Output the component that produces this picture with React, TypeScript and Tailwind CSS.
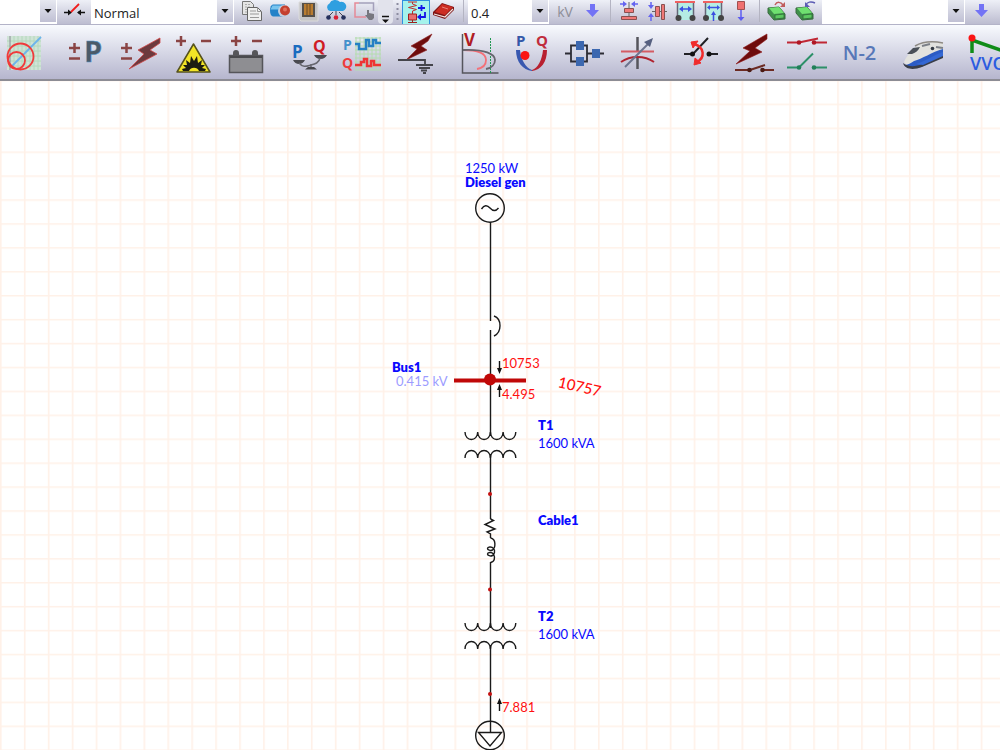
import type { ReactNode } from 'react';
import clsx from 'clsx';

type TIcon = {
  width?: number;
  children: ReactNode;
};

// small icons of the upper bar
const SmallIcon = ({ width = 28, children }: TIcon) => (
  <svg width={width} height={24} viewBox={`0 0 ${width} 24`} fill="none" aria-hidden="true">
    {children}
  </svg>
);

// big icons of the lower bar
const BigIcon = ({ width = 53, children }: TIcon) => (
  <svg width={width} height={52} viewBox={`0 0 ${width} 52`} fill="none" aria-hidden="true">
    {children}
  </svg>
);

type TTool = {
  label: string;
  className?: string;
  children: ReactNode;
};

const Tool = ({ label, className, children }: TTool) => (
  <button type="button" aria-label={label} className={clsx('shrink-0', className)}>
    {children}
  </button>
);

type TCombo = {
  label: string;
  value: string;
  className?: string;
};

const Combo = ({ label, value, className }: TCombo) => (
  <div className={clsx('relative h-[23px] shrink-0 bg-white', className)}>
    <select
      aria-label={label}
      defaultValue={value}
      className="h-full w-full appearance-none bg-white pb-0.5 pl-[3px] pr-4 text-[13px] leading-5 text-[#222222] outline-none"
    >
      <option value={value}>{value}</option>
    </select>
    <span className="pointer-events-none absolute right-px top-0 grid h-[22px] w-4 place-items-center bg-linear-to-b from-[#e6e8f0] to-[#c0c0d4]">
      <svg width="8" height="4" viewBox="0 0 8 4" aria-hidden="true">
        <path d="M0.500 0h7L4 4z" fill="#111111" />
      </svg>
    </span>
  </div>
);

const Divider = ({ className }: { className?: string }) => (
  <div className={clsx('flex h-[22px] shrink-0 justify-center', className)}>
    <span className="w-px bg-[#b4b4c2]" />
  </div>
);

const DownArrow = () => <path d="M8 4h5v6h4l-6.500 7L4 10h4z" fill="#7373f5" />;

const GreenBox = () => (
  <>
    <path d="M5 8l11-1 6 7v5l-11 1-6-7z" fill="#3f8f4a" stroke="#3a6a40" />
    <path d="M6 8l10-1 5 6-10 1z" fill="#6fe070" />
    <path d="M12 15l9-1v4l-9 1z" fill="#5cc860" stroke="#2f6a38" strokeWidth="0.800" />
  </>
);

const TopBar = () => (
  <div className="flex h-[26px] items-start overflow-hidden border-b-2 border-[#b3b3c8] bg-linear-to-b from-[#eef0f7] to-[#bcbcd0]">
    <Combo label="Configuration" value="" className="w-[57px]" />
    <Tool label="Switch status">
      <SmallIcon width={34}>
        <path d="M7 12.500h6M21 12.500h7" stroke="#111" strokeWidth="1.500" />
        <path d="M11 9.500l4 3-4 3zM24 9.500l-4 3 4 3z" fill="#111" />
        <path d="M14 12l8-8" stroke="#f01c1c" strokeWidth="1.800" />
      </SmallIcon>
    </Tool>
    <Combo label="Status" value="Normal" className="w-[143px]" />
    <div className="ml-1 flex shrink-0">
      <Tool label="Copy">
        <SmallIcon>
          <path d="M4.500 1.500h8l3 3v10h-11z" fill="#e4e4e4" stroke="#777" />
          <path d="M7 4.500h5M7 7h5M7 9.500h5M7 12h5" stroke="#aaa" strokeDasharray="2 1" />
          <path d="M9.500 7.500h10l4 4v9h-14z" fill="#efefef" stroke="#666" />
          <path d="M19.500 7.500v4h4M12 11h6M12 14h9M12 17.500h9" stroke="#999" />
        </SmallIcon>
      </Tool>
      <Tool label="Cable size">
        <SmallIcon>
          <path d="M7 4.500h12v12H7a3 6 0 0 1 0-12z" fill="#2482c8" />
          <path d="M6.500 5.500h12v4h-14z" fill="#79c4ee" />
          <circle cx="18" cy="11" r="6" fill="#c3cfde" />
          <circle cx="19" cy="10.500" r="5" fill="#c4402f" />
          <circle cx="19" cy="9.500" r="2" fill="#e0705e" />
        </SmallIcon>
      </Tool>
      <Tool label="Panel">
        <SmallIcon>
          <path d="M5 2h17l2 2v17H7l-2-2z" fill="#c4c4c6" stroke="#dcdcdc" />
          <path d="M8 3h13v14H8z" fill="#55504a" />
          <path d="M10 4h9v11h-9z" fill="#b87c30" />
          <path d="M13 4v11M16 4v11" stroke="#6a4a25" />
        </SmallIcon>
      </Tool>
      <Tool label="Cloud">
        <SmallIcon>
          <path d="M8 11a4 4 0 0 1-.5-7.500A6 5 0 0 1 18 2a4.500 4.500 0 0 1 3 9z" fill="#2f9fe0" />
          <path d="M14 11v4M11 12l-4 4M17 12l4 4" stroke="#445" />
          <circle cx="6.500" cy="17.500" r="2.300" fill="#26305c" />
          <circle cx="14" cy="17.500" r="2.300" fill="#d82034" />
          <circle cx="21.500" cy="17.500" r="2.300" fill="#26305c" />
        </SmallIcon>
      </Tool>
      <Tool label="Select area">
        <SmallIcon>
          <path d="M23.500 11V3H9" stroke="#a3a0bb" strokeWidth="1.500" />
          <path d="M9 3H5v14h11" stroke="#e58a98" strokeWidth="1.500" />
          <path d="M17 10h2v3l5 1v4l-2 2h-3l-4-5 2 0z" fill="#77777f" />
        </SmallIcon>
      </Tool>
    </div>
    <Tool label="Toolbar options" className="w-[15px] self-stretch rounded-b bg-[#e2e3ec]">
      <SmallIcon width={15}>
        <path d="M4 16.500h7" stroke="#111" strokeWidth="1.500" />
        <path d="M4 19.500h7l-3.500 3.500z" fill="#111" />
      </SmallIcon>
    </Tool>
    <div className="w-[9px] shrink-0">
      <SmallIcon width={9}>
        <path d="M4.500 3v17" stroke="#8c8ca0" strokeWidth="2" strokeDasharray="2 3" />
      </SmallIcon>
    </div>
    <Tool label="Show results" className="w-[28px] border border-[#2f8fe0] bg-[#a5f3ec]">
      <SmallIcon width={26}>
        <path d="M5 1h9M9.500 1v2l4 1.500-8 2 8 2-4 1.500v3" stroke="#c03030" />
        <path d="M5.500 13h8v6h-8z" fill="#e87070" stroke="#a02020" />
        <path d="M9.500 19v2M5 21.500h9" stroke="#a02020" />
        <path d="M15 7h7M18.500 4v6" stroke="#1414e8" strokeWidth="1.800" />
        <path d="M22 11v5h-6" stroke="#1414e8" strokeWidth="1.800" />
        <path d="M18 12.500v7l-4-3.500z" fill="#1414e8" />
      </SmallIcon>
    </Tool>
    <Tool label="Library">
      <SmallIcon>
        <path d="M3 12l9-9 12 4v3l-9 9-12-4z" fill="#7e1515" />
        <path d="M5 12l7-8 11 3-8 8z" fill="#cc2c22" />
        <path d="M4 14l11 3 8-8" stroke="#f3e4e0" strokeWidth="1.200" />
        <path d="M12 7l6 2" stroke="#e88078" />
      </SmallIcon>
    </Tool>
    <Divider className="w-[10px]" />
    <Combo label="Voltage" value="0.4" className="w-[81px]" />
    <span className="w-8 shrink-0 text-center text-[14px] leading-6 text-[#8e8e98]">kV</span>
    <Tool label="Apply voltage">
      <SmallIcon width={24}>
        <g transform="translate(1 0)">
          <DownArrow />
        </g>
      </SmallIcon>
    </Tool>
    <Divider className="w-[10px]" />
    <div className="flex shrink-0">
      <Tool label="Align centers vertically">
        <SmallIcon>
          <path d="M14 2v18" stroke="#666" />
          <path d="M9.500 8.500h9v4h-9zM6.500 16.500h15v3h-15z" fill="#f07878" stroke="#8a5050" />
          <path d="M5 4h4M23 4h-4" stroke="#6464f0" strokeWidth="1.500" />
          <path d="M8 1v6l4-3zM20 1v6l-4-3z" fill="#6464f0" />
        </SmallIcon>
      </Tool>
      <Tool label="Align centers horizontally">
        <SmallIcon>
          <path d="M9 11.500h15" stroke="#666" />
          <path d="M12.500 6.500h4v10h-4zM18.500 4.500h3v15h-3z" fill="#f07878" stroke="#8a5050" />
          <path d="M8 2v4M8 21v-4" stroke="#6464f0" strokeWidth="1.500" />
          <path d="M5 5h6L8 9zM5 17h6l-3-4z" fill="#6464f0" />
        </SmallIcon>
      </Tool>
      <Tool label="Distribute horizontally">
        <SmallIcon>
          <path d="M6 3h17v17H6z" fill="#b4ece4" />
          <path d="M4 2h20" stroke="#f06060" strokeWidth="2" />
          <path d="M6.500 3v14M22.500 3v14" stroke="#667" strokeWidth="1.500" />
          <circle cx="7.500" cy="18" r="3" fill="#444" />
          <circle cx="21.500" cy="18" r="3" fill="#444" />
          <path d="M10 9h9" stroke="#3c50e0" strokeWidth="1.500" />
          <path d="M8 9l4-3v6zM21 9l-4-3v6z" fill="#3c50e0" />
        </SmallIcon>
      </Tool>
      <Tool label="Distribute vertically">
        <SmallIcon>
          <path d="M6 3h17v17H6z" fill="#b4ece4" />
          <path d="M4 2h20" stroke="#f06060" strokeWidth="2" />
          <path d="M6.500 3v14M22.500 3v14" stroke="#667" strokeWidth="1.500" />
          <circle cx="7" cy="18" r="3" fill="#444" />
          <circle cx="22" cy="18" r="3" fill="#444" />
          <path d="M10 7.500h9M14.500 14v7" stroke="#3c50e0" strokeWidth="1.500" />
          <path d="M8 7.500l3-2.500v5zM21 7.500l-3-2.500v5zM12 15l2.500-4 2.500 4z" fill="#3c50e0" />
        </SmallIcon>
      </Tool>
      <Tool label="Drop element">
        <SmallIcon>
          <path d="M10.500 1.500h7v8h-7z" fill="#f07070" stroke="#a05050" />
          <path d="M14 10v8" stroke="#5c5cf0" strokeWidth="1.500" />
          <path d="M10.500 17h7l-3.500 4z" fill="#5c5cf0" />
        </SmallIcon>
      </Tool>
    </div>
    <Divider className="w-2" />
    <div className="flex shrink-0">
      <Tool label="Load base">
        <SmallIcon>
          <GreenBox />
          <path d="M12 5c2-4 6-3 8 0" stroke="#c05c5c" strokeWidth="1.500" />
          <path d="M22 2v5h-5z" fill="#c05c5c" />
        </SmallIcon>
      </Tool>
      <Tool label="Save base">
        <SmallIcon>
          <GreenBox />
          <path d="M24 3c-4-2-8-1-9 2" stroke="#5c5cb4" strokeWidth="1.500" />
          <path d="M14 2v5h5z" fill="#5c5cb4" />
        </SmallIcon>
      </Tool>
    </div>
    <Combo label="Find" value="" className="ml-[3px] min-w-[80px] flex-1" />
    <Tool label="Go to">
      <SmallIcon width={35}>
        <g transform="translate(6 0)">
          <DownArrow />
        </g>
      </SmallIcon>
    </Tool>
  </div>
);

const PLUS = 'stroke-[#8a4444] stroke-[2.5px]';

const StudyBar = () => (
  <div className="-mt-px flex h-14 items-start gap-[10px] overflow-hidden border-b-2 border-[#8c8c94] bg-linear-to-b from-[#f8fafe] to-[#b6b6ce] pt-[3px]">
    <div className="-ml-0.5 flex shrink-0">
      <Tool label="Protection zones">
        <BigIcon>
          <path d="M9 8h34v34H9z" fill="#cfe3d6" />
          <path
            d="M16 8v34M20 8v34M24 8v34M28 8v34M32 8v34M36 8v34M40 8v34M9 13h34M9 18h34M9 23h34M9 28h34M9 33h34M9 38h34"
            stroke="#b4d8bc"
          />
          <path d="M12 8v34" stroke="#8a8a94" />
          <path d="M14 38L43 9" stroke="#6cb4ec" strokeWidth="1.800" />
          <circle cx="22.500" cy="28.500" r="13" stroke="#f03a3a" strokeWidth="1.800" />
          <circle cx="18.500" cy="32.500" r="8.500" stroke="#f03a3a" strokeWidth="1.800" />
        </BigIcon>
      </Tool>
    </div>
    <div className="flex shrink-0">
      <Tool label="Load flow">
        <BigIcon>
          <path d="M8 20h11M13.500 15v10M8 30.500h11" className={PLUS} />
          <text
            x="23"
            y="34"
            className="font-['Open_Sans',sans-serif] text-[29px] font-bold"
            fill="#4c5a68"
            stroke="#5098cc"
            strokeWidth="0.400"
          >
            P
          </text>
        </BigIcon>
      </Tool>
      <Tool label="Short circuit">
        <BigIcon>
          <path d="M7 20h11M12.500 15v10M7 30.500h11" className={PLUS} />
          <path d="M46 10L24 22l6 4-15 15 28-15-7-4 10-7z" fill="#6c3a3e" stroke="#d04848" strokeWidth="0.800" />
        </BigIcon>
      </Tool>
      <Tool label="Arc flash">
        <BigIcon>
          <path d="M9 13h10M14 8v10M34 13h10" className={PLUS} />
          <path d="M26.500 16L43 44H10z" fill="#f2e426" stroke="#55521c" strokeWidth="1.500" strokeLinejoin="round" />
          <path
            d="M16 43l-1-2 4-1-3-3 4 0-1-5 4 3 1-7 3 5 3-5 1 7 4-3-1 5 4 0-3 3 4 1-1 2h-6a5.500 5.500 0 0 0-10 0z"
            fill="#1c1c12"
          />
        </BigIcon>
      </Tool>
      <Tool label="Battery">
        <BigIcon>
          <path d="M11 13h10M16 8v10M32 13h10" className={PLUS} />
          <path d="M13 27v-2q0-3 3-3t3 3v2zM32 27v-2q0-3 3-3t3 3v2z" fill="#56565a" />
          <path d="M9.500 27.500h33v17h-33z" fill="#8e8e92" stroke="#55555a" strokeWidth="1.500" />
          <path d="M10 29h32" stroke="#4a4a4e" strokeWidth="2" />
        </BigIcon>
      </Tool>
    </div>
    <div className="flex shrink-0">
      <Tool label="Balanced load flow">
        <BigIcon>
          <text x="9" y="30" className="font-['Open_Sans',sans-serif] text-[17px] font-bold" fill="#1a6cc0">
            P
          </text>
          <text x="30" y="24" className="font-['Open_Sans',sans-serif] text-[16px] font-bold" fill="#d01c24">
            Q
          </text>
          <path d="M10 32h12q-2 4-6 4t-6-4zM31 27h13q-2 4-6.500 4T31 27z" fill="#4a4a50" />
          <path d="M16 35c4 5 8 3 12 2s8-2 9-7M28 36v5" stroke="#66666e" strokeWidth="1.500" />
          <path d="M22 41.500l3-2.500h6l3 2.500z" fill="#44444a" />
        </BigIcon>
      </Tool>
      <Tool label="Time domain load flow">
        <BigIcon>
          <path
            d="M20 9v33M24 9v33M28 9v33M32 9v33M36 9v33M40 9v33M44 9v33M19 10h26M19 14h26M19 18h26M19 22h26M19 26h26M19 30h26M19 34h26M19 38h26M19 42h26"
            stroke="#b4dcae"
          />
          <text x="7" y="22" className="font-['Open_Sans',sans-serif] text-[14px] font-bold" fill="#4490cc">
            P
          </text>
          <text x="6" y="40" className="font-['Open_Sans',sans-serif] text-[14px] font-bold" fill="#ee3c3c">
            Q
          </text>
          <path d="M19 16h4v5h7v-9h3v6h4v-6h3v3h5" stroke="#2480c4" strokeWidth="2.500" />
          <path d="M19 37h6v-3h3v-3h3v7h4v-5h3v4h7" stroke="#ee3434" strokeWidth="2.500" />
        </BigIcon>
      </Tool>
      <Tool label="Ground fault">
        <BigIcon>
          <path d="M43 6L22 18l6 3-11 11 21-10-6-4 7-5z" fill="#6e0c0c" stroke="#8e2424" strokeWidth="0.600" />
          <path d="M9 32h27v4M27 37h17M30 40h11M32 42.500h6M34 45h3" stroke="#44444a" strokeWidth="1.800" />
        </BigIcon>
      </Tool>
    </div>
    <div className="flex shrink-0">
      <Tool label="Voltage stability">
        <BigIcon>
          <path d="M10.500 6v39h36" stroke="#55555c" strokeWidth="1.500" />
          <text x="12" y="18" className="font-['Open_Sans',sans-serif] text-[17px] font-bold" fill="#b01c24">
            V
          </text>
          <path d="M38.500 10v35" stroke="#209850" strokeDasharray="2 1" />
          <path d="M11 22c16 0 23 4 23 10 0 5-3 8-9 9" stroke="#f47078" strokeWidth="1.800" />
          <path d="M11 22c22-1 32 4 32 10 0 4-3 8-9 9" stroke="#66666e" strokeWidth="1.800" />
        </BigIcon>
      </Tool>
      <Tool label="Optimal power flow">
        <BigIcon>
          <text x="11" y="18" className="font-['Open_Sans',sans-serif] text-[15px] font-bold" fill="#3458a8">
            P
          </text>
          <text x="31" y="18" className="font-['Open_Sans',sans-serif] text-[15px] font-bold" fill="#c02c3c">
            Q
          </text>
          <path d="M11 22h4c1 10 6 18 12 20v1C18 42 11 34 11 22z" fill="#3858b0" />
          <path d="M42 22h-4c-1 10-5 18-11 20v1c9-1 15-9 15-21z" fill="#b82030" />
          <circle cx="20" cy="27.500" r="4.500" fill="#fa1414" />
        </BigIcon>
      </Tool>
      <Tool label="Reliability">
        <BigIcon>
          <path d="M7 25.500h6M22 17.500h-9v16h16v-16h-9M29 25.500h17" stroke="#2c2c34" strokeWidth="1.800" />
          <path d="M18 13h8v9h-8zM18 29h8v9h-8zM34 21h8v9h-8z" fill="#3c68b0" />
        </BigIcon>
      </Tool>
      <Tool label="Capacitor placement">
        <BigIcon>
          <path d="M26.500 9v14M26.500 29v12" stroke="#55555c" strokeWidth="2.500" />
          <path d="M10 23.500h33" stroke="#d45c64" strokeWidth="2" />
          <path d="M10 34q7-5 16.500-5T43 34" stroke="#b02430" strokeWidth="2" />
          <path d="M14 39l24-24" stroke="#6c748e" strokeWidth="2" />
          <path d="M42 10l-9 4 6 5z" fill="#566080" />
        </BigIcon>
      </Tool>
    </div>
    <div className="flex shrink-0">
      <Tool label="Switching sequence">
        <BigIcon>
          <path d="M10 26h9l15-16M35 26h9" stroke="#202024" strokeWidth="2" />
          <circle cx="18.500" cy="26" r="2.500" fill="#111" />
          <circle cx="35" cy="26" r="2.500" fill="#111" />
          <path d="M20 16c11 3 11 14 3 18" stroke="#f02c2c" strokeWidth="2.500" />
          <path d="M17 14l7-1-5 7zM20 37l1-7 6 5z" fill="#f02c2c" stroke="#f02c2c" />
        </BigIcon>
      </Tool>
      <Tool label="Switch fault">
        <BigIcon>
          <path d="M40 6L16 20l7 3L9 36l26-12-7-4 12-9z" fill="#6e0c0c" stroke="#901818" strokeWidth="0.600" />
          <path d="M8 42h15l15-5M35 42h12" stroke="#6c2a22" strokeWidth="2" />
          <circle cx="22.500" cy="42" r="2.300" fill="#4a1a14" />
          <circle cx="35.500" cy="42" r="2.300" fill="#4a1a14" />
        </BigIcon>
      </Tool>
      <Tool label="Switching optimization">
        <BigIcon>
          <path d="M7 14.500h12l19-4M34 14.500h13" stroke="#c02834" strokeWidth="2" />
          <circle cx="19" cy="14.500" r="2.300" fill="#b01824" />
          <circle cx="34" cy="14.500" r="2.300" fill="#b01824" />
          <path d="M7 39.500h12l14-14M34 39.500h13" stroke="#2c9068" strokeWidth="2" />
          <circle cx="19" cy="39.500" r="2.300" fill="#208058" />
          <circle cx="34" cy="39.500" r="2.300" fill="#208058" />
        </BigIcon>
      </Tool>
      <button type="button" className="h-[50px] w-[53px] shrink-0 text-[20px] font-semibold text-[#5878b8]">
        N-2
      </button>
    </div>
    <Tool label="Traction power">
      <BigIcon>
        <path d="M8 34c3-8 12-17 23-20 5-1 11-1 16 1v7L22 36c-6 2-12 2-14-2z" fill="#e2e2de" />
        <path d="M18 33c8-2 18-9 29-12v8L25 39c-6 2-13 1-17-2 4 0 7-2 10-4z" fill="#2c5cc4" />
        <path d="M7 35c5 4 12 4 19 1l21-9v3L26 39c-8 3-17 3-19-4z" fill="#3a3e48" />
        <path d="M20 36c8-2 18-9 27-12v4L27 37z" fill="#3468d4" />
        <path d="M11 26l6-6 7-1c-2 4-5 6-8 7z" fill="#4a5058" />
        <path d="M19 18c7-4 18-5 28-3" stroke="#8e8a84" strokeWidth="1.500" />
        <path d="M26 18l8-2M40 19l7 1" stroke="#7c8088" strokeWidth="2" />
        <circle cx="36.500" cy="20.500" r="1.800" fill="#333a44" />
      </BigIcon>
    </Tool>
    <Tool label="Volt-VAR optimization">
      <BigIcon>
        <path d="M13 25V12l40 14" stroke="#108c18" strokeWidth="3.500" />
        <circle cx="13" cy="10" r="3.500" fill="#fa1414" />
        <text x="11" y="42" className="font-['Open_Sans',sans-serif] text-[18px] font-semibold" fill="#2c5ce0">
          VVO
        </text>
      </BigIcon>
    </Tool>
  </div>
);

const Grid = () => (
  <svg className="absolute inset-0 h-full w-full" aria-hidden="true">
    <defs>
      <pattern id="grid" x="0" y="-1.300" width="23.920" height="23.920" patternUnits="userSpaceOnUse">
        <path d="M0.800 0v24M0 0.800h24" stroke="#fff1e8" strokeWidth="1.600" />
      </pattern>
    </defs>
    <rect width="100%" height="100%" fill="url(#grid)" />
  </svg>
);

// two windings facing each other, x and y give the top center
const Transformer = ({ x, y }: { x: number; y: number }) => (
  <g transform={`translate(${x} ${y})`}>
    <path d="M-25.500 0c0 10 12.700 10 12.700 0c0 10 12.700 10 12.700 0c0 10 12.700 10 12.700 0c0 10 12.700 10 12.700 0" />
    <path d="M-25.500 26c0-10 12.700-10 12.700 0c0-10 12.700-10 12.700 0c0-10 12.700-10 12.700 0c0-10 12.700-10 12.700 0" />
  </g>
);

const OneLine = () => (
  <svg width="1000" height="669" viewBox="0 0 1000 669" fill="none" role="img" aria-label="One-line diagram">
    <g stroke="#1a1a1a" strokeWidth="1.400">
      <circle cx="490" cy="127" r="14.300" />
      <path d="M481.500 128q4-6 8.500-1t8.500 0" />
      <path d="M490.500 141v99M490.500 249v106M490.500 373v65M490.500 481v66M490.500 565v86" />
      <path d="M494 235c8 3 8 16 0 20" />
      <Transformer x={490.5} y={351} />
      <Transformer x={490.5} y={542} />
      <path d="M490.500 438l3 1.500-8.500 4 10 4.500-8 3 3.500 2v4" />
      <path d="M490.500 457c6 1 5 10 2 12-2 1-5 0-5-1.500s4-2.500 6 0c2 2 1 6-1 7s-5 0-5-1.500 4-2.500 6 0c2 4 1 8-3 8.500" />
      <circle cx="490" cy="654.500" r="14.300" />
      <path d="M478.500 651.500h23L490 665z" />
    </g>
    <path d="M454 299.500h72" stroke="#c00808" strokeWidth="4" />
    <circle cx="490" cy="298.500" r="6" fill="#c00808" />
    <g fill="#c41010">
      <circle cx="490" cy="413" r="2" />
      <circle cx="490" cy="508.500" r="2" />
      <circle cx="490" cy="613" r="2" />
    </g>
    <g stroke="#111" strokeWidth="1.400">
      <path d="M499.500 280v9M499.500 316v-9M499.500 630v-9" />
      <path d="M497 287h5l-2.500 6zM497 309h5l-2.500-6zM497 623h5l-2.500-6z" fill="#111" stroke="none" />
    </g>
  </svg>
);

const labels = [
  { text: '1250 kW', className: 'left-[465px] top-[80px] text-[#0a0aff]' },
  { text: 'Diesel gen', className: 'left-[465px] top-[94px] font-extrabold text-[#0a0aff]' },
  { text: 'Bus1', className: 'left-[392px] top-[279px] font-extrabold text-[#0a0aff]' },
  { text: '0.415 kV', className: 'left-[396px] top-[293px] text-[#9c9cff]' },
  { text: '10753', className: 'left-[502px] top-[275px] text-[#ff1010]' },
  { text: '4.495', className: 'left-[502px] top-[306px] text-[#ff1010]' },
  { text: '10757', className: 'left-[558px] top-[298px] rotate-[13deg] text-[15px] font-medium text-[#ff1010]' },
  { text: 'T1', className: 'left-[538px] top-[337px] font-extrabold text-[#0a0aff]' },
  { text: '1600 kVA', className: 'left-[538px] top-[355px] text-[#0a0aff]' },
  { text: 'Cable1', className: 'left-[538px] top-[432px] font-extrabold text-[#0a0aff]' },
  { text: 'T2', className: 'left-[538px] top-[528px] font-extrabold text-[#0a0aff]' },
  { text: '1600 kVA', className: 'left-[538px] top-[546px] text-[#0a0aff]' },
  { text: '7.881', className: 'left-[502px] top-[619px] text-[#ff1010]' },
];

export default function App() {
  return (
    <div className="flex min-h-screen flex-col bg-white font-['Open_Sans',sans-serif]">
      <header>
        <TopBar />
        <StudyBar />
      </header>
      <main className="relative flex-1 overflow-hidden">
        <Grid />
        <div className="relative font-['Lato',sans-serif] text-[13px] leading-[14px]">
          <OneLine />
          {labels.map(({ text, className }) => (
            <span key={className} className={clsx('absolute whitespace-nowrap', className)}>
              {text}
            </span>
          ))}
        </div>
      </main>
    </div>
  );
}
